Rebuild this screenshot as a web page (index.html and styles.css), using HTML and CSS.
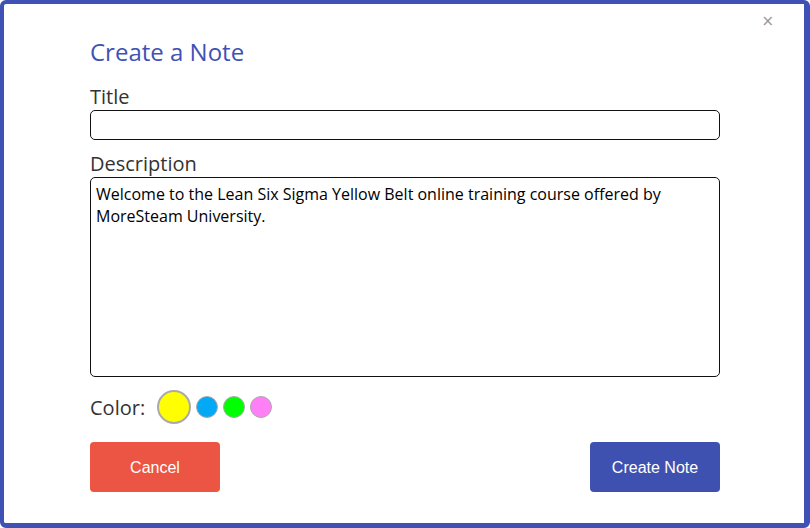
FILE: index.html
```html
<!DOCTYPE html>
<html>
<head>
<meta charset="utf-8">
<link rel="stylesheet" href="styles.css">
</head>
<body>
<div class="modal">
  <button class="close" aria-label="Close">×</button>
  <div class="content">
    <h2 class="heading">Create a Note</h2>
    <label class="label">Title</label>
    <input class="field" type="text">
    <label class="label label-desc">Description</label>
    <textarea class="area">Welcome to the Lean Six Sigma Yellow Belt online training course offered by MoreSteam University.</textarea>
    <div class="colors">
      <span class="label color-label">Color:</span>
      <span class="swatch sel yellow"></span>
      <span class="swatch blue"></span>
      <span class="swatch green"></span>
      <span class="swatch pink"></span>
    </div>
    <div class="actions">
      <button class="btn cancel">Cancel</button>
      <button class="btn create">Create Note</button>
    </div>
  </div>
</div>
</body>
</html>
```
FILE: styles.css
```css
* { box-sizing: border-box; }
html, body { margin: 0; padding: 0; background: #fff; }
body { font-family: "Open Sans", "Noto Sans", sans-serif; }
.modal {
  position: relative;
  width: 810px;
  height: 528px;
  border-style: solid;
  border-color: #3f51b5;
  border-width: 4px 6px 5px 4px;
  border-radius: 6px;
  background: #fff;
}
.close {
  position: absolute;
  top: 8px;
  right: 30px;
  border: 0;
  background: none;
  color: #999;
  font-family: "DejaVu Sans", sans-serif;
  font-size: 15px;
  padding: 0;
  cursor: pointer;
}
.content {
  padding: 0 84px 0 86px;
  display: flex;
  flex-direction: column;
}
.heading {
  margin: 32px 0 0;
  font-weight: 400;
  font-size: 24px;
  line-height: 32px;
  color: #3f51b5;
}
.label {
  display: block;
  font-size: 20px;
  line-height: 24px;
  color: #333;
}
.heading + .label { margin-top: 17px; }
.field {
  display: block;
  width: 630px;
  height: 30px;
  margin: 1px 0 0;
  border: 1px solid #111;
  border-radius: 5px;
  font: 16px "Open Sans", sans-serif;
  padding: 0 5px;
}
.label-desc { margin-top: 12px; }
.area {
  display: block;
  width: 630px;
  height: 200px;
  margin: 1px 0 0;
  border: 1px solid #111;
  border-radius: 5px;
  font: 16px/22px "Open Sans", sans-serif;
  color: #000;
  padding: 5px 5px;
  resize: none;
}
.colors {
  display: flex;
  align-items: center;
  gap: 5px;
  margin-top: 13px;
  height: 34px;
}
.color-label { margin-right: 7px; padding-top: 2px; }
.swatch {
  display: block;
  width: 22px;
  height: 22px;
  border-radius: 50%;
  border: 1px solid #aaa;
}
.swatch.sel {
  width: 34px;
  height: 34px;
  border: 2px solid #aaa;
}
.yellow { background: #ffff00; }
.blue { background: #03a9f4; }
.green { background: #00ff00; }
.pink { background: #ff80f6; }
.actions {
  display: flex;
  justify-content: space-between;
  margin-top: 18px;
}
.btn {
  width: 130px;
  height: 50px;
  border: 0;
  border-radius: 4px;
  padding: 2px 0 0;
  color: #fff;
  font-family: "Liberation Sans", Arial, sans-serif;
  font-size: 16px;
  cursor: pointer;
}
.cancel { background: #ec5543; }
.create { background: #3f51b0; }
```
